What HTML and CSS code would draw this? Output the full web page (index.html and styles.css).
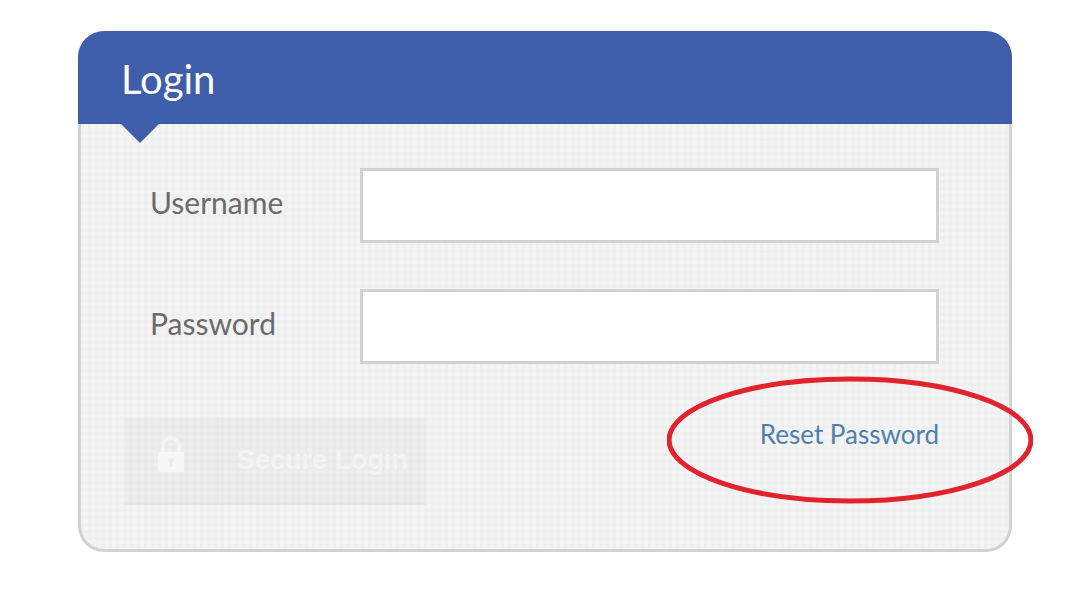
FILE: index.html
```
<!DOCTYPE html>
<html lang="en">
<head>
  <meta charset="UTF-8">
  <meta name="viewport" content="width=device-width, initial-scale=1.0">
  <title>Login</title>
  <link rel="stylesheet" href="styles.css">
</head>
<body>

  <div class="login-box">
    <!-- Header -->
    <div class="login-header">
      <h1>Login</h1>
    </div>

    <!-- Login form -->
    <form class="login-form">
      <div class="form-row">
        <label for="username">Username</label>
        <input type="text" id="username" name="username">
      </div>
      <div class="form-row">
        <label for="password">Password</label>
        <input type="password" id="password" name="password">
      </div>
      <div class="actions">
        <button type="button" class="login-button">
          <svg class="lock" viewBox="0 0 26 36" aria-hidden="true">
            <path d="M5 17V10a8 8 0 0 1 16 0v7" fill="none" stroke="#f5f5f5" stroke-width="4"/>
            <path fill="#f7f7f7" fill-rule="evenodd" d="M2 16h22q2 0 2 2v16q0 2-2 2H2q-2 0-2-2V18q0-2 2-2zM13 21a3 3 0 0 0-1.500 5.600V31h3v-4.400A3 3 0 0 0 13 21z"/>
          </svg>
          <span class="button-text">Secure Login</span>
        </button>
        <a href="#" class="reset-link">Reset Password
          <svg class="highlight" viewBox="0 0 366 128" aria-hidden="true">
            <ellipse cx="183" cy="64" rx="181" ry="61" fill="none" stroke="#e0232c" stroke-width="5"/>
          </svg>
        </a>
      </div>
    </form>
  </div>

</body>
</html>
```

FILE: styles.css
```
body {
  font-family: Lato, Arial, sans-serif;
  margin: 0;
  padding: 31px 76px 36px 78px;
  background-color: #fff;
}
* {
  box-sizing: border-box;
}
.login-box {
  border-radius: 26px;
  color: #6b6b6b;
}
.login-header {
  position: relative;
  background-color: #3e5eaa;
  border-radius: 26px 26px 0 0;
  padding: 24px 43px 21px;
}
.login-header h1 {
  margin: 0;
  font-size: 40px;
  line-height: 48px;
  font-weight: 400;
  color: #fff;
}
/* pointer under the header */
.login-header::after {
  content: "";
  position: absolute;
  left: 43px;
  top: 100%;
  border: 19px solid transparent;
  border-top-color: #3e5eaa;
  border-bottom: 0;
}
.login-form {
  display: flex;
  flex-direction: column;
  gap: 46px;
  padding: 44px 70px 44px 69px;
  border: 3px solid #d2d2d2;
  border-top: 0;
  border-radius: 0 0 26px 26px;
  background-color: #f4f4f4;
  background-image:
    repeating-linear-gradient(90deg, rgba(0, 0, 0, 0.012) 0 3px, transparent 3px 7px),
    repeating-linear-gradient(rgba(0, 0, 0, 0.012) 0 3px, transparent 3px 7px);
}
.form-row {
  display: flex;
  align-items: center;
}
.form-row label {
  width: 210px;
  padding-bottom: 8px;
  font-size: 30px;
  line-height: 36px;
}
.form-row input {
  flex: 1;
  min-width: 0;
  height: 75px;
  padding: 0 16px;
  border: 3px solid #d2d2d2;
  border-radius: 0;
  background-color: #fff;
  font: inherit;
  font-size: 30px;
  color: #444;
}
.actions {
  display: flex;
  justify-content: space-between;
  align-items: flex-start;
  margin-top: 7px;
  margin-left: -25px;
}
.login-button {
  display: flex;
  width: 301px;
  height: 88px;
  padding: 0;
  border: 0;
  border-bottom: 3px solid rgba(0, 0, 0, 0.01);
  background-color: rgba(0, 0, 0, 0.025);
  font-family: "Liberation Sans", Arial, sans-serif;
  font-size: 27px;
  font-weight: 700;
  color: #f3f3f3;
  cursor: pointer;
}
.lock {
  width: 26px;
  height: 36px;
  margin: 19px 33px 0;
}
.button-text {
  flex: 1;
  height: 85px;
  border-left: 2px solid rgba(0, 0, 0, 0.01);
  line-height: 86px;
}
.reset-link {
  position: relative;
  margin-top: 2px;
  font-size: 26px;
  line-height: 30px;
  color: #4f7fad;
  text-decoration: none;
}
/* ring drawn over the link */
.highlight {
  position: absolute;
  top: -43px;
  right: -94px;
  width: 366px;
  height: 128px;
  pointer-events: none;
}
```
